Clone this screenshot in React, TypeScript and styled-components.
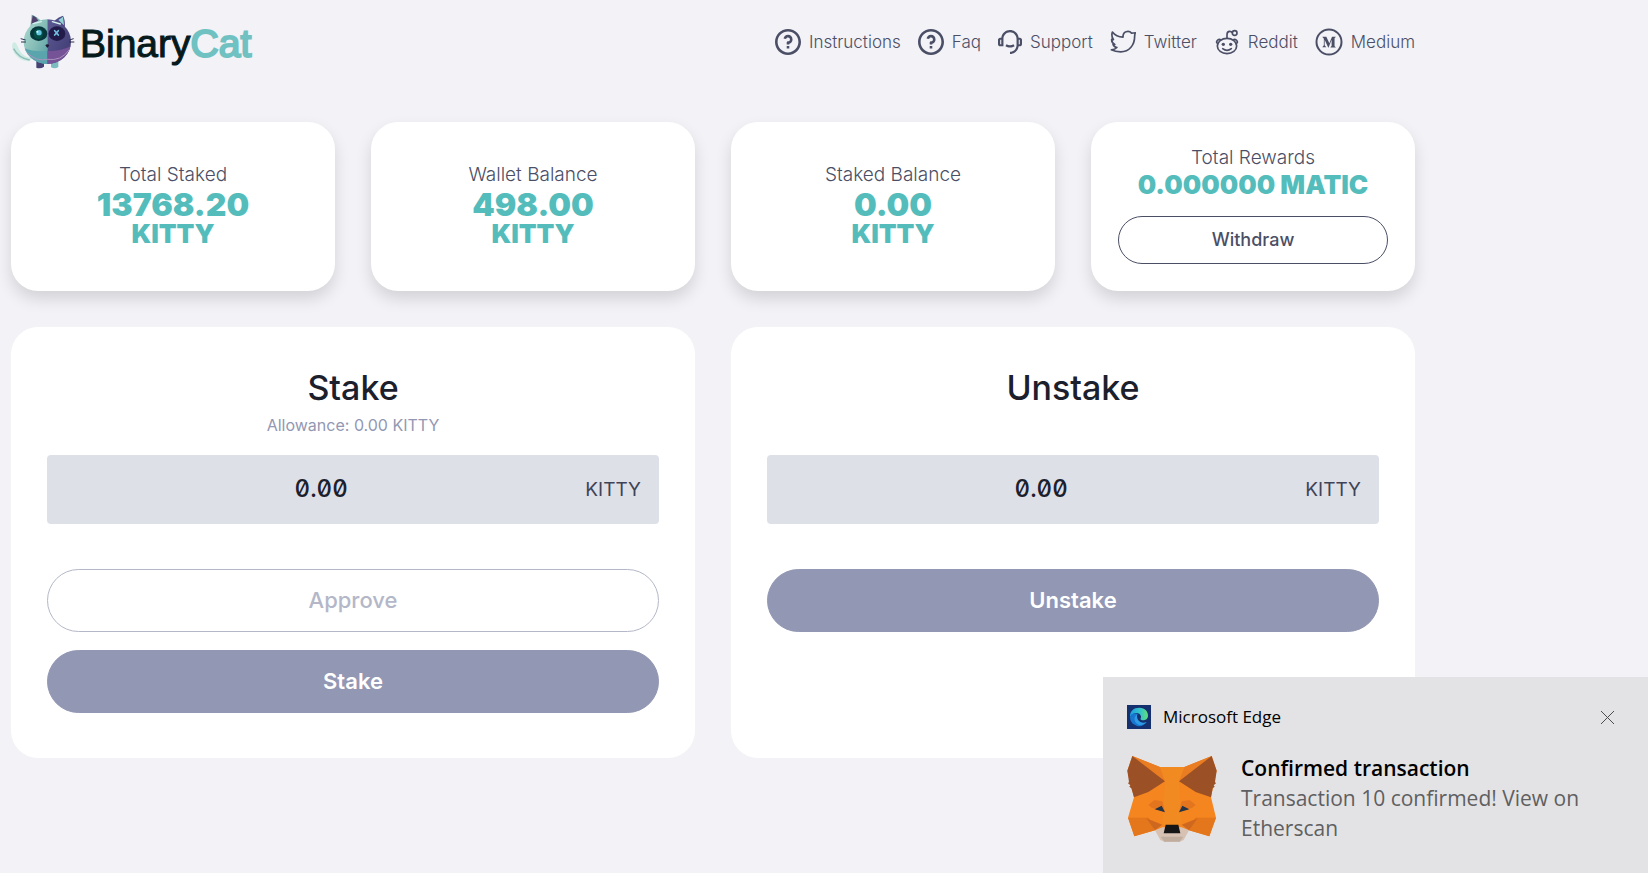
import React from 'react';
import styled, { createGlobalStyle } from 'styled-components';
import { RiQuestionLine, RiCustomerService2Line } from 'react-icons/ri';
import { AiOutlineMedium } from 'react-icons/ai';

const colors = {
  page: '#f2f2f7',
  card: '#ffffff',
  ink: '#1c202d',
  body: '#4b4f66',
  muted: '#9297b3',
  faint: '#b4b7c8',
  teal: '#54bdbc',
  field: '#dee0e7',
  toast: '#e3e3e5',
};

const GlobalStyle = createGlobalStyle`
  *, *::before, *::after { box-sizing: border-box; }
  body {
    margin: 0;
    min-height: 100vh;
    background: ${colors.page};
    color: ${colors.body};
    font-family: Inter, "Open Sans", sans-serif;
    font-size: 16px;
  }
  h1, h2, p { margin: 0; }
  button, input { font: inherit; color: inherit; }
  button { cursor: pointer; }
`;

const Page = styled.div`
  max-width: 1426px;
  padding: 14px 11px 32px;
`;

const Header = styled.header`
  display: flex;
  align-items: center;
  justify-content: space-between;
  height: 56px;
  margin-bottom: 52px;
`;

const Logo = styled.a`
  display: flex;
  align-items: center;
  gap: 5px;
  color: #06191b;
  font: 39px/56px "Liberation Sans", Arial, sans-serif;
  text-decoration: none;
`;

const LogoText = styled.span<{ $accent?: boolean }>`
  padding-top: 4px;
  color: ${(p) => (p.$accent ? '#6fc1c2' : 'inherit')};
  -webkit-text-stroke: ${(p) => (p.$accent ? '2px #6fc1c2' : '1px #06191b')};
`;

const Nav = styled.nav`
  display: flex;
  gap: 17px;
  padding-bottom: 1px;
`;

const NavLink = styled.a`
  display: flex;
  align-items: center;
  gap: 8px;
  color: ${colors.body};
  font-size: 17px;
  font-weight: 300;
  line-height: 28px;
  text-decoration: none;
  svg { flex: none; }
`;

const Stats = styled.section`
  display: grid;
  grid-template-columns: repeat(4, 1fr);
  gap: 36px;
  margin-bottom: 36px;
`;

const StatCard = styled.article`
  display: flex;
  flex-direction: column;
  align-items: center;
  justify-content: center;
  min-height: 169px;
  padding: 20px 27px 26px;
  border-radius: 27px;
  background: ${colors.card};
  box-shadow: 0 8px 16px rgba(0, 0, 0, 0.13);
  text-align: center;
`;

const StatLabel = styled.p`
  font-size: 19px;
  font-weight: 300;
  line-height: 28px;
`;

const StatValue = styled.p<{ $large?: boolean }>`
  color: ${colors.teal};
  font-size: ${(p) => (p.$large ? 32 : 26)}px;
  font-weight: 900;
  line-height: ${(p) => (p.$large ? 32 : 26)}px;
  white-space: nowrap;
`;

const WithdrawButton = styled.button`
  width: 100%;
  height: 48px;
  margin-top: 18px;
  border: 1px solid ${colors.body};
  border-radius: 24px;
  background: transparent;
  font-size: 18px;
  font-weight: 500;
`;

const Panels = styled.section`
  display: grid;
  grid-template-columns: repeat(2, 1fr);
  gap: 36px;
`;

const Panel = styled.form`
  display: flex;
  flex-direction: column;
  min-height: 431px;
  padding: 36px;
  border-radius: 27px;
  background: ${colors.card};
`;

const PanelTitle = styled.h2`
  color: ${colors.ink};
  font-size: 34px;
  font-weight: 500;
  line-height: 50px;
  text-align: center;
`;

const PanelNote = styled.p`
  height: 24px;
  color: ${colors.muted};
  font-size: 16px;
  line-height: 24px;
  text-align: center;
`;

const AmountField = styled.label`
  display: flex;
  align-items: center;
  height: 69px;
  margin: 18px 0 45px;
  padding-right: 18px;
  border-radius: 4px;
  background: ${colors.field};
  color: #3f4356;
  font-size: 19px;
`;

const AmountInput = styled.input`
  flex: 1;
  min-width: 0;
  height: 100%;
  padding: 0 8px 2px 18px;
  border: 0;
  outline: 0;
  background: transparent;
  color: ${colors.ink};
  font-size: 24px;
  font-weight: 500;
  font-feature-settings: "tnum", "zero";
  text-align: center;
`;

const ActionButton = styled.button<{ $outlined?: boolean }>`
  height: 63px;
  padding: 0 24px 2px;
  border: 1px solid ${(p) => (p.$outlined ? colors.faint : colors.muted)};
  border-radius: 32px;
  background: ${(p) => (p.$outlined ? 'transparent' : colors.muted)};
  color: ${(p) => (p.$outlined ? colors.faint : '#ffffff')};
  font-size: 22px;
  font-weight: ${(p) => (p.$outlined ? 500 : 600)};
  & + & { margin-top: 18px; }
`;

const Toast = styled.aside`
  position: fixed;
  right: 0;
  bottom: 0;
  width: 545px;
  min-height: 196px;
  padding: 28px 32px 28px 24px;
  background: ${colors.toast};
  color: #000000;
  font-family: "Open Sans", "Noto Sans", sans-serif;
`;

const ToastHeader = styled.div`
  display: flex;
  align-items: center;
  gap: 12px;
  height: 24px;
  font-size: 17px;
  line-height: 24px;
`;

const CloseButton = styled.button`
  display: flex;
  margin-left: auto;
  padding: 1px;
  border: 0;
  background: transparent;
  color: #4c4c4e;
`;

const ToastContent = styled.div`
  display: flex;
  align-items: flex-start;
  gap: 24px;
  margin-top: 24px;
  svg { flex: none; margin-top: 3px; }
`;

const ToastTitle = styled.h2`
  font-size: 21px;
  font-weight: 600;
  line-height: 30px;
`;

const ToastText = styled.p`
  color: #5f5f61;
  font-size: 21px;
  line-height: 30px;
`;

const CatMark = () => (
  <svg width="64" height="56" viewBox="0 0 192 168" aria-hidden="true">
    <defs>
      <linearGradient id="catLeft" x1="0" y1="0" x2="1" y2="1">
        <stop offset="0" stopColor="#b6e3d6" />
        <stop offset=".55" stopColor="#86bdb7" />
        <stop offset="1" stopColor="#4f98a3" />
      </linearGradient>
      <linearGradient id="catRight" x1="0" y1="0" x2="1" y2="1">
        <stop offset="0" stopColor="#5f5c96" />
        <stop offset="1" stopColor="#39356c" />
      </linearGradient>
      <clipPath id="catBody"><ellipse cx="109" cy="83" rx="71" ry="67" /></clipPath>
    </defs>
    <path d="M6 86C-4 102 14 140 54 142L64 132C36 130 26 112 18 92Q12 82 6 86Z" fill="#cdebe3" />
    <path d="M8 104Q22 132 56 138" stroke="#8cbdb8" strokeWidth="4" fill="none" />
    <path d="M76 140V161Q88 166 99 158V145Z" fill="#474274" />
    <path d="M120 145V160Q132 166 142 159V140Z" fill="#7cbcc0" />
    <path d="M58 40L62 2Q80 8 90 22Z" fill="#7fbab7" />
    <path d="M61 30L65 4Q75 8 82 20Z" fill="#52406c" />
    <path d="M130 20Q144 8 156 5Q164 20 161 42Z" fill="#4e4b84" />
    <path d="M142 18L156 8L159 34Z" fill="#92d1d5" />
    <g clipPath="url(#catBody)">
      <path d="M30 0H109V160H30Z" fill="url(#catLeft)" />
      <path d="M109 0H190V160H109Z" fill="url(#catRight)" />
      <path d="M36 101Q75 116 109 110V160H36Z" fill="#5aa5ad" />
      <path d="M109 110Q150 114 184 94V160H109Z" fill="#765297" />
      <path d="M48 116Q76 144 109 136M109 136Q150 142 174 108" stroke="#aa93bd" strokeWidth="3" fill="none" />
    </g>
    <ellipse cx="83" cy="59" rx="26" ry="22" fill="#07373d" />
    <ellipse cx="138" cy="59" rx="25" ry="22" fill="#221b4a" />
    <ellipse cx="82" cy="59" rx="14" ry="16" fill="#035047" />
    <circle cx="84" cy="56" r="8" fill="#65c5df" />
    <circle cx="79" cy="53" r="3" fill="#dffbff" />
    <path d="M131 50L142 63M142 50L131 63" stroke="#72bddd" strokeWidth="5" strokeLinecap="round" />
    <path d="M66 29L91 23M124 23L148 30" stroke="#d5f1ef" strokeWidth="4" strokeLinecap="round" />
    <path d="M103 94Q109 88 115 94L109 102Z" fill="#1d1830" />
    <path d="M29 74L44 78M30 84L45 84M175 78L188 74M174 84L190 84" stroke="#30314f" strokeWidth="3" />
  </svg>
);

const TwitterIcon = () => (
  <svg width="26" height="24" viewBox="-1 -1 76 70" fill="none" stroke="currentColor" strokeWidth="5" strokeLinejoin="round" aria-hidden="true">
    <path d="M6 5Q17 19 37 20C36 2 54-1 62 8Q68 8 73 7Q71 12 71 18C71 42 56 63 30 63Q14 63 3 57Q14 56 19 50Q10 48 8 41H13Q3 36 4 26L9 27Q2 17 6 5Z" />
  </svg>
);

const RedditIcon = () => (
  <svg width="26" height="26" viewBox="0 0 78 78" fill="none" stroke="currentColor" strokeWidth="5" aria-hidden="true">
    <ellipse cx="39" cy="51" rx="29" ry="23" />
    <path d="M9 43A8 8 0 0 1 21 33M57 33A8 8 0 0 1 69 43" />
    <path d="M39 28V17Q39 7 47 7Q52 7 55 11" />
    <circle cx="62" cy="12" r="7" />
    <circle cx="28" cy="46" r="5" fill="currentColor" stroke="none" />
    <circle cx="50" cy="46" r="5" fill="currentColor" stroke="none" />
    <path d="M26 59Q39 69 52 59" strokeLinecap="round" />
  </svg>
);

const MediumIcon = () => (
  <svg width="28" height="28" viewBox="0 0 28 28" fill="none" stroke="currentColor" strokeWidth="2" aria-hidden="true">
    <circle cx="14" cy="14" r="12.5" />
    <AiOutlineMedium x="5" y="5" size={18} />
  </svg>
);

const EdgeIcon = () => (
  <svg width="24" height="24" viewBox="0 0 72 72" aria-hidden="true">
    <defs>
      <linearGradient id="edgeTop" x1="0" y1="0" x2="1" y2="0">
        <stop offset="0" stopColor="#1c9ee4" />
        <stop offset=".6" stopColor="#36c6c6" />
        <stop offset="1" stopColor="#65df75" />
      </linearGradient>
    </defs>
    <path fill="#15306e" d="M0 0H72V72H0Z" />
    <path d="M9 36C8 18 20 8 37 8C54 8 64 20 63 33C62 45 50 48 42 44C38 42 43 40 42 34C40 25 30 22 22 25Q12 28 9 36Z" fill="url(#edgeTop)" />
    <path d="M9 36C13 24 25 22 32 27C23 31 23 46 34 52C43 57 52 55 59 51C52 62 40 66 29 62C16 58 9 48 9 36Z" fill="#1976cf" />
    <path d="M32 27C20 32 20 49 30 56C37 62 50 61 59 51C50 55 40 54 34 46C29 39 29 31 32 27Z" fill="#2d9be6" />
  </svg>
);

const FoxIcon = () => (
  <svg width="90" height="86" viewBox="0 0 270 258" aria-hidden="true">
    <path fill="#f5851f" d="M16 0L99 33H172L254 0L269 44L252 124L267 185L247 241L186 223L159 235H111L84 223L22 241L3 185L21 124L1 44Z" />
    <path fill="#ea7c22" d="M16 0L99 33L114 76ZM254 0L172 33L156 76Z" />
    <path fill="#9c5025" d="M16 0L1 44L6 78L3 82L10 88L7 92L13 97L21 124L64 108L114 76ZM254 0L269 44L264 78L267 82L260 88L263 92L257 97L252 124L206 108L156 76Z" />
    <path fill="#f18a21" d="M99 33L114 76L106 206L135 220L164 206L156 76L172 33Z" />
    <path fill="#e4751f" d="M64 147L82 132L106 136L114 168L74 155ZM206 147L188 132L164 136L156 168L196 155Z" />
    <path fill="#e4761b" d="M3 185H65L84 223L22 241ZM267 185H205L186 223L247 241Z" />
    <path fill="#cf681f" d="M58 187L106 206L84 223ZM212 187L164 206L186 223Z" />
    <path fill="#233447" d="M83 160L104 149L114 169ZM187 160L166 149L156 169Z" />
    <path fill="#d7c1b3" d="M84 223L106 214H164L186 223L170 252L158 257H112L100 252Z" />
    <path fill="#c0ad9e" d="M101 242H169L158 257H112Z" />
    <path fill="#161616" d="M116 206H154L160 232H110Z" />
  </svg>
);

const links = [
  { label: 'Instructions', icon: <RiQuestionLine size={26} viewBox="2 2 20 20" /> },
  { label: 'Faq', icon: <RiQuestionLine size={26} viewBox="2 2 20 20" /> },
  { label: 'Support', icon: <RiCustomerService2Line size={24} viewBox="1 1 22 22" /> },
  { label: 'Twitter', icon: <TwitterIcon /> },
  { label: 'Reddit', icon: <RedditIcon /> },
  { label: 'Medium', icon: <MediumIcon /> },
];

const balances = [
  { label: 'Total Staked', value: '13768.20' },
  { label: 'Wallet Balance', value: '498.00' },
  { label: 'Staked Balance', value: '0.00' },
];

const Amount = ({ name }: { name: string }) => (
  <AmountField>
    <AmountInput name={name} defaultValue="0.00" inputMode="decimal" />
    KITTY
  </AmountField>
);

export default function App() {
  return (
    <>
      <GlobalStyle />
      <Page>
        <Header>
          <Logo href="#">
            <CatMark />
            <LogoText>Binary<LogoText $accent>Cat</LogoText></LogoText>
          </Logo>
          <Nav>
            {links.map(({ label, icon }) => (
              <NavLink key={label} href="#">{icon}{label}</NavLink>
            ))}
          </Nav>
        </Header>
        <main>
          <Stats>
            {balances.map(({ label, value }) => (
              <StatCard key={label}>
                <StatLabel>{label}</StatLabel>
                <StatValue $large>{value}</StatValue>
                <StatValue>KITTY</StatValue>
              </StatCard>
            ))}
            <StatCard>
              <StatLabel>Total Rewards</StatLabel>
              <StatValue>0.000000 MATIC</StatValue>
              <WithdrawButton type="button">Withdraw</WithdrawButton>
            </StatCard>
          </Stats>
          <Panels>
            <Panel>
              <PanelTitle>Stake</PanelTitle>
              <PanelNote>Allowance: 0.00 KITTY</PanelNote>
              <Amount name="stake" />
              <ActionButton type="button" $outlined>Approve</ActionButton>
              <ActionButton type="button">Stake</ActionButton>
            </Panel>
            <Panel>
              <PanelTitle>Unstake</PanelTitle>
              <PanelNote />
              <Amount name="unstake" />
              <ActionButton type="button">Unstake</ActionButton>
            </Panel>
          </Panels>
        </main>
      </Page>
      <Toast role="status">
        <ToastHeader>
          <EdgeIcon />
          Microsoft Edge
          <CloseButton type="button" aria-label="Close">
            <svg width="15" height="15" viewBox="0 0 15 15" stroke="currentColor" aria-hidden="true">
              <path d="M1 1L14 14M14 1L1 14" />
            </svg>
          </CloseButton>
        </ToastHeader>
        <ToastContent>
          <FoxIcon />
          <div>
            <ToastTitle>Confirmed transaction</ToastTitle>
            <ToastText>Transaction 10 confirmed! View on Etherscan</ToastText>
          </div>
        </ToastContent>
      </Toast>
    </>
  );
}
